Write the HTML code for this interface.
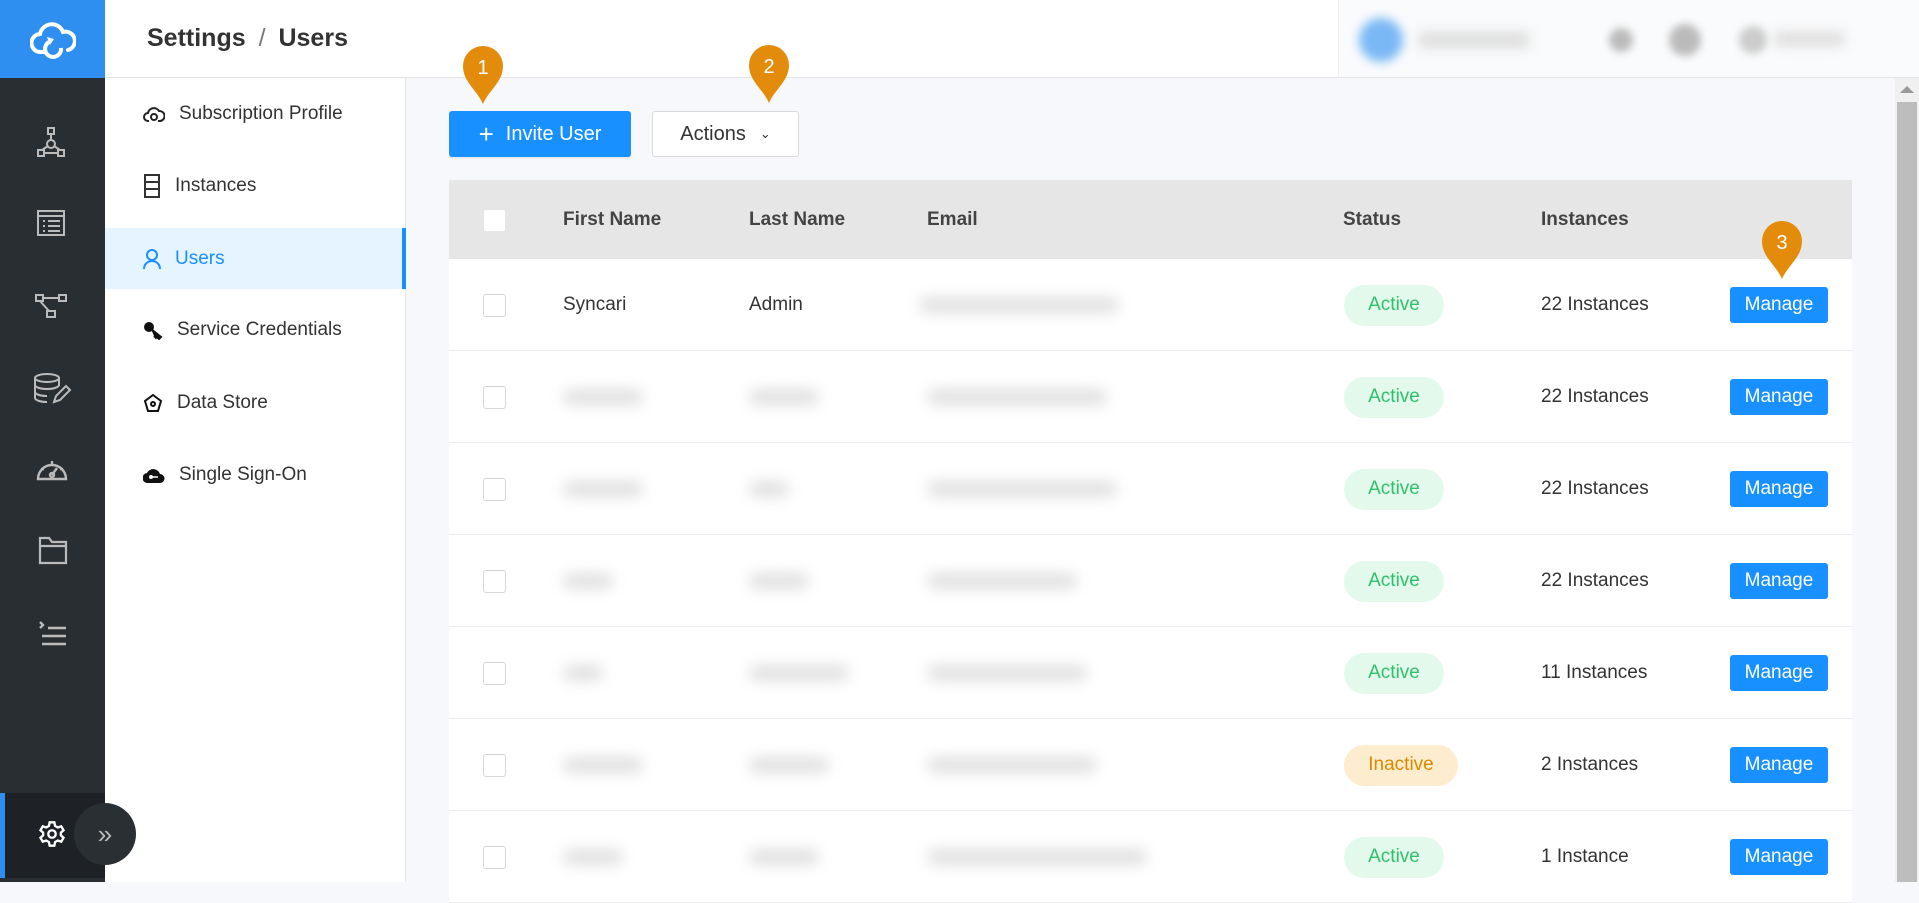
<!DOCTYPE html>
<html><head><meta charset="utf-8"><style>
*{box-sizing:border-box;margin:0;padding:0}
body{width:1919px;height:882px;overflow:hidden;font-family:"Liberation Sans",sans-serif;background:#f7f8fc;position:relative;color:#333}
.abs{position:absolute}
.side{left:0;top:0;width:105px;height:882px;background:#292e33}
.logo{left:0;top:0;width:105px;height:78px;background:#2e8ff0}
.hdr{left:105px;top:0;width:1814px;height:78px;background:#fff;border-bottom:1px solid #e3e3e3}
.title{left:147px;top:24px;font-size:25px;font-weight:bold;color:#333}
.sub{left:105px;top:78px;width:301px;height:804px;background:#fff;border-right:1px solid #e4e4e4}
.item{position:absolute;left:0;width:300px;height:60px;display:flex;align-items:center;padding-left:38px;font-size:19px;color:#333}
.item svg{margin-right:14px}
.btn{height:46px;border-radius:3px;font-size:20px;display:flex;align-items:center;justify-content:center}
.th{top:180px;left:449px;width:1403px;height:79px;background:#e6e6e6}
.row{left:449px;width:1403px;height:92px;background:#fff;border-bottom:1px solid #ececec}
.cell{position:absolute;top:50%;transform:translateY(-50%);font-size:19px;color:#333;white-space:nowrap}
.cb{position:absolute;left:34px;top:50%;margin-top:-11px;width:23px;height:23px;border:1px solid #d6d6d6;border-radius:3px;background:#fff}
.blur{position:absolute;top:50%;margin-top:-8px;height:16px;background:#ccc;filter:blur(7px);border-radius:8px;opacity:.6}
.badge{position:absolute;left:895px;top:50%;margin-top:-20px;height:41px;border-radius:21px;font-size:19px;display:flex;align-items:center;justify-content:center}
.act{width:100px;background:#e3f9ec;color:#2fc16a}
.ina{width:114px;background:#fdeccd;color:#d98a00}
.mng{position:absolute;left:1281px;top:50%;margin-top:-18px;width:98px;height:36px;background:#1890ff;color:#fff;font-size:19px;border-radius:3px;display:flex;align-items:center;justify-content:center}
.pin{position:absolute;width:44px;height:58px}
</style></head><body>
<div class="abs side"></div>
<div class="abs logo"><svg class="abs" style="left:30px;top:20px" width="46" height="40" viewBox="0 0 46 40"><path d="M14 32 H11 A9 9 0 0 1 10 14 A12 12 0 0 1 33 12 A9 9 0 0 1 38 30" fill="none" stroke="#fff" stroke-width="4" stroke-linecap="round"/><path d="M19 22 A8 8 0 1 0 31 28" fill="none" stroke="#fff" stroke-width="4"/><path d="M17 17 L20 25 L24 19Z" fill="#fff"/></svg></div>
<svg class="abs" style="left:35px;top:126px" width="32" height="32" viewBox="0 0 32 32" fill="none" stroke="#bbb" stroke-width="2"><rect x="13" y="2" width="6" height="6"/><rect x="3" y="24" width="6" height="6"/><rect x="23" y="24" width="6" height="6"/><circle cx="16" cy="18" r="4"/><path d="M16 8v6M13 20l-6 4M19 20l6 4M9 27h14"/></svg>
<svg class="abs" style="left:36px;top:208px" width="30" height="30" viewBox="0 0 30 30" fill="none" stroke="#bbb" stroke-width="2"><rect x="2" y="3" width="26" height="24"/><path d="M2 8h26M7 13h2M12 13h12M7 18h2M12 18h12M7 23h2M12 23h12"/></svg>
<svg class="abs" style="left:34px;top:292px" width="34" height="28" viewBox="0 0 34 28" fill="none" stroke="#bbb" stroke-width="2"><rect x="2" y="3" width="7" height="6"/><rect x="25" y="3" width="7" height="6"/><rect x="13" y="19" width="8" height="6"/><path d="M9 6h16M6 9l9 10"/></svg>
<svg class="abs" style="left:32px;top:372px" width="40" height="34" viewBox="0 0 40 34" fill="none" stroke="#bbb" stroke-width="2"><ellipse cx="15" cy="6" rx="12" ry="4"/><path d="M3 6v20c0 2 5 4 12 4M3 13c0 2 5 4 12 4s12-2 12-4M3 20c0 2 5 4 12 4M27 6v8"/><path d="M22 30l2-6 10-10 4 4-10 10z"/></svg>
<svg class="abs" style="left:35px;top:455px" width="34" height="30" viewBox="0 0 34 30" fill="none" stroke="#bbb" stroke-width="2.4"><path d="M3 24A14 14 0 1 1 31 24Z"/><path d="M17 20l5-7M17 6v3M6 14h3M25 14h3"/><circle cx="17" cy="20" r="2"/></svg>
<svg class="abs" style="left:38px;top:535px" width="30" height="30" viewBox="0 0 30 30" fill="none" stroke="#bbb" stroke-width="2.2"><path d="M2 28V3h9l3 4h14v21zM2 11h26"/></svg>
<svg class="abs" style="left:38px;top:620px" width="30" height="28" viewBox="0 0 30 28" fill="none" stroke="#bbb" stroke-width="2.4"><path d="M2 2l3 3-3 3M10 8h18M4 16h24M4 24h24"/></svg>
<div class="abs" style="left:0;top:793px;width:105px;height:85px;background:#1e2226"></div>
<div class="abs" style="left:0;top:793px;width:5px;height:85px;background:#2e8ff0"></div>
<svg class="abs" style="left:38px;top:820px" width="28" height="28" viewBox="0 0 24 24" fill="none" stroke="#fff" stroke-width="2"><circle cx="12" cy="12" r="3.2"/><path d="M10 2h4l.6 3 2.4 1.4 2.9-1 2 3.4-2.3 2v2.4l2.3 2-2 3.4-2.9-1L14.6 19 14 22h-4l-.6-3-2.4-1.4-2.9 1-2-3.4 2.3-2v-2.4l-2.3-2 2-3.4 2.9 1L9.4 5z"/></svg>
<div class="abs hdr"></div>
<div class="abs title">Settings <span style="font-weight:normal;color:#777;margin:0 6px">/</span> Users</div>
<div class="abs" style="left:1338px;top:0;width:581px;height:77px;background:#fafbfc;border-left:1px solid #eee">
 <div class="abs" style="left:20px;top:18px;width:44px;height:44px;border-radius:50%;background:#7ab8f5;filter:blur(5px)"></div>
 <div class="abs" style="left:80px;top:32px;width:110px;height:16px;background:#ddd;filter:blur(6px)"></div>
 <div class="abs" style="left:270px;top:28px;width:24px;height:24px;border-radius:50%;background:#bbb;filter:blur(4px)"></div>
 <div class="abs" style="left:330px;top:24px;width:32px;height:32px;border-radius:50%;background:#bbb;filter:blur(4px)"></div>
 <div class="abs" style="left:400px;top:26px;width:28px;height:28px;border-radius:50%;background:#ccc;filter:blur(4px)"></div>
 <div class="abs" style="left:435px;top:32px;width:70px;height:14px;background:#ddd;filter:blur(6px)"></div>
</div>
<div class="abs sub">
 <div class="item" style="top:6px"><svg width="22" height="20" viewBox="0 0 22 20" fill="none" stroke="#222" stroke-width="2"><path d="M6 17H5a4 4 0 0 1 0-8 6 6 0 0 1 11-2 4 4 0 0 1 1 10h-2"/><circle cx="11" cy="13" r="3"/></svg>Subscription Profile</div>
 <div class="item" style="top:78px"><svg width="18" height="24" viewBox="0 0 18 24" fill="none" stroke="#333" stroke-width="2"><rect x="2" y="1" width="14" height="22"/><path d="M2 8h14M2 15h14"/></svg>Instances</div>
 <div class="item" style="top:150px;background:#e6f4ff;color:#1890ff;height:61px"><svg width="18" height="22" viewBox="0 0 18 22" fill="none" stroke="#1890ff" stroke-width="2"><circle cx="9" cy="7" r="5"/><path d="M1 21c0-5 4-8 8-8s8 3 8 8"/></svg>Users</div>
 <div class="abs" style="left:297px;top:150px;width:4px;height:61px;background:#1890ff"></div>
 <div class="item" style="top:222px"><svg width="20" height="20" viewBox="0 0 20 20"><circle cx="6" cy="7" r="5" fill="#111"/><path d="M8 9l10 8-2 2-2-2-1 1-2-2" fill="#111" stroke="#111" stroke-width="2"/></svg>Service Credentials</div>
 <div class="item" style="top:295px"><svg width="20" height="20" viewBox="0 0 20 20" fill="none" stroke="#111" stroke-width="2"><path d="M10 2l8 6-3 10H5L2 8z"/><circle cx="10" cy="11" r="2"/></svg>Data Store</div>
 <div class="item" style="top:367px"><svg width="22" height="16" viewBox="0 0 22 16"><path d="M5 16a5 5 0 0 1-1-10 7 7 0 0 1 13 1 4.5 4.5 0 0 1 0 9z" fill="#111"/><circle cx="8" cy="10" r="2" fill="#fff"/><path d="M9 10h6" stroke="#fff" stroke-width="1.5"/></svg>Single Sign-On</div>
</div>
<div class="abs" style="left:74px;top:803px;width:62px;height:62px;border-radius:50%;background:#2a2f34;color:#bbb;font-size:26px;display:flex;align-items:center;justify-content:center">»</div>
<div class="abs btn" style="left:449px;top:111px;width:182px;background:#1890ff;color:#fff;box-shadow:0 2px 0 rgba(0,0,0,.05)"><span style="font-size:26px;font-weight:200;margin-right:12px">+</span>Invite User</div>
<div class="abs btn" style="left:652px;top:111px;width:147px;background:#fff;border:1px solid #d9d9d9;color:#333">Actions<span style="margin-left:14px;font-size:13px">&#8964;</span></div>
<div class="abs th"><div class="cb" style="border-color:#e6e6e6"></div>
<div class="cell" style="left:114px;font-weight:bold;color:#444">First Name</div>
<div class="cell" style="left:300px;font-weight:bold;color:#444">Last Name</div>
<div class="cell" style="left:478px;font-weight:bold;color:#444">Email</div>
<div class="cell" style="left:894px;font-weight:bold;color:#444">Status</div>
<div class="cell" style="left:1092px;font-weight:bold;color:#444">Instances</div></div>
<div class="abs row" style="top:259px"><div class="cb"></div><div class="cell" style="left:114px">Syncari</div><div class="cell" style="left:300px">Admin</div><div class="blur" style="left:470px;width:200px"></div><div class="badge act">Active</div><div class="cell" style="left:1092px">22 Instances</div><div class="mng">Manage</div></div>
<div class="abs row" style="top:351px"><div class="cb"></div><div class="blur" style="left:114px;width:80px"></div><div class="blur" style="left:300px;width:70px"></div><div class="blur" style="left:478px;width:180px"></div><div class="badge act">Active</div><div class="cell" style="left:1092px">22 Instances</div><div class="mng">Manage</div></div>
<div class="abs row" style="top:443px"><div class="cb"></div><div class="blur" style="left:114px;width:80px"></div><div class="blur" style="left:300px;width:40px"></div><div class="blur" style="left:478px;width:190px"></div><div class="badge act">Active</div><div class="cell" style="left:1092px">22 Instances</div><div class="mng">Manage</div></div>
<div class="abs row" style="top:535px"><div class="cb"></div><div class="blur" style="left:114px;width:50px"></div><div class="blur" style="left:300px;width:60px"></div><div class="blur" style="left:478px;width:150px"></div><div class="badge act">Active</div><div class="cell" style="left:1092px">22 Instances</div><div class="mng">Manage</div></div>
<div class="abs row" style="top:627px"><div class="cb"></div><div class="blur" style="left:114px;width:40px"></div><div class="blur" style="left:300px;width:100px"></div><div class="blur" style="left:478px;width:160px"></div><div class="badge act">Active</div><div class="cell" style="left:1092px">11 Instances</div><div class="mng">Manage</div></div>
<div class="abs row" style="top:719px"><div class="cb"></div><div class="blur" style="left:114px;width:80px"></div><div class="blur" style="left:300px;width:80px"></div><div class="blur" style="left:478px;width:170px"></div><div class="badge ina">Inactive</div><div class="cell" style="left:1092px">2 Instances</div><div class="mng">Manage</div></div>
<div class="abs row" style="top:811px;height:92px"><div class="cb"></div><div class="blur" style="left:114px;width:60px"></div><div class="blur" style="left:300px;width:70px"></div><div class="blur" style="left:478px;width:220px"></div><div class="badge act">Active</div><div class="cell" style="left:1092px">1 Instance</div><div class="mng">Manage</div></div>
<div class="abs" style="left:1895px;top:78px;width:24px;height:804px;background:#f0f0f0"></div>
<div class="abs" style="left:1897px;top:102px;width:20px;height:780px;background:#bdbdbd"></div>
<div class="abs" style="left:1900px;top:86px;width:0;height:0;border-left:7px solid transparent;border-right:7px solid transparent;border-bottom:7px solid #999"></div>
<svg class="pin" style="left:461px;top:46px" viewBox="0 0 44 58"><path d="M22 58 C16 44 2 36 2 20 A20 20 0 0 1 42 20 C42 36 28 44 22 58Z" fill="#e38b0b"/><text x="22" y="28" text-anchor="middle" fill="#fff" font-size="20" font-family="Liberation Sans">1</text></svg>
<svg class="pin" style="left:747px;top:45px" viewBox="0 0 44 58"><path d="M22 58 C16 44 2 36 2 20 A20 20 0 0 1 42 20 C42 36 28 44 22 58Z" fill="#e38b0b"/><text x="22" y="28" text-anchor="middle" fill="#fff" font-size="20" font-family="Liberation Sans">2</text></svg>
<svg class="pin" style="left:1760px;top:221px" viewBox="0 0 44 58"><path d="M22 58 C16 44 2 36 2 20 A20 20 0 0 1 42 20 C42 36 28 44 22 58Z" fill="#e38b0b"/><text x="22" y="28" text-anchor="middle" fill="#fff" font-size="20" font-family="Liberation Sans">3</text></svg>
</body></html>
